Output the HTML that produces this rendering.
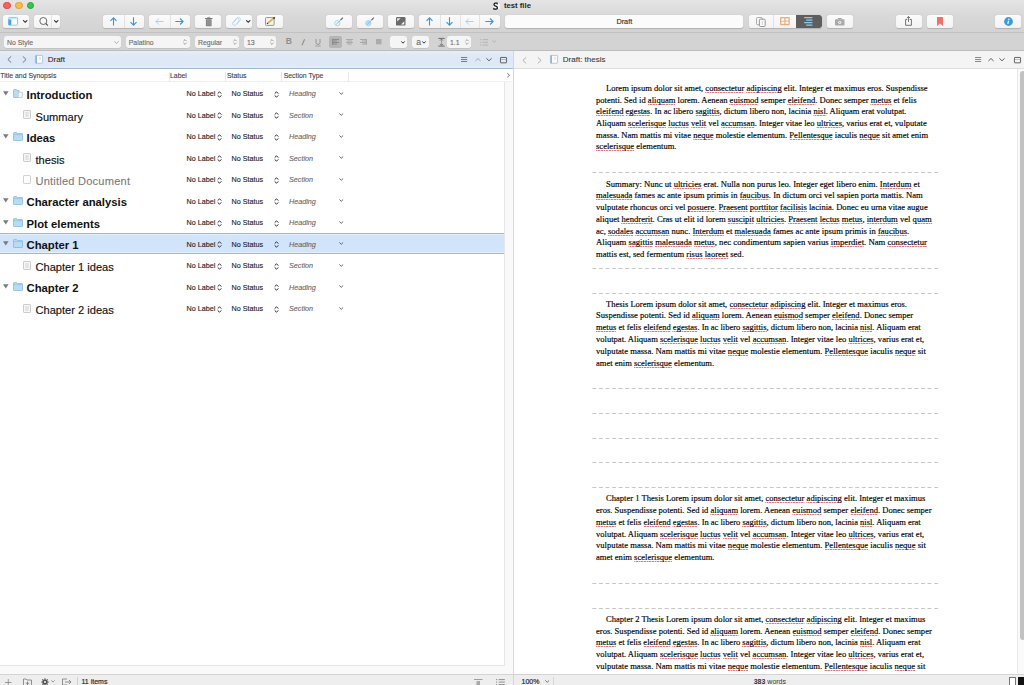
<!DOCTYPE html>
<html><head><meta charset="utf-8">
<style>
*{margin:0;padding:0;box-sizing:border-box}
html,body{width:1024px;height:685px;overflow:hidden;background:#fff;font-family:"Liberation Sans",sans-serif}
.a{position:absolute}
#tb{position:absolute;left:0;top:0;width:1024px;height:33px;background:linear-gradient(#e5e5e5,#d9d9d9 45%,#d3d3d3);border-bottom:1px solid #c2c2c2}
.tl{position:absolute;top:1.5px;width:7.5px;height:7.5px;border-radius:50%}
.btn{position:absolute;top:15px;height:12.5px;background:linear-gradient(#fbfbfb,#f3f3f3);border-radius:2.5px;box-shadow:0 0.6px 1px rgba(0,0,0,0.17)}
.sep{position:absolute;top:0;bottom:0;width:1px;background:#e2e2e2}
#fb{position:absolute;left:0;top:33px;width:1024px;height:18px;background:#d3d3d3;border-bottom:1px solid #bcbcbc}
.fbox{position:absolute;top:3px;height:11.5px;background:#f5f5f5;border-radius:2.5px;box-shadow:0 0.5px 0.5px rgba(0,0,0,0.15);font-size:6.9px;color:#6a6a6a;line-height:13px;padding-left:3px;-webkit-text-stroke:0.1px #6a6a6a}
svg{position:absolute;overflow:visible}
#bh{position:absolute;left:0;top:51px;width:513px;height:18px;background:linear-gradient(#e7eefa,#dfe8f6 30%,#dfe8f6 80%,#e4edfa);border-bottom:1px solid #a3b9d2}
#eh{position:absolute;left:514px;top:51px;width:510px;height:18px;background:#f4f4f4;border-bottom:1px solid #dedede}
#split{position:absolute;left:513px;top:51px;width:1px;height:634px;background:#d6d6d6}
#ch{position:absolute;left:0;top:69px;width:513px;height:13px;background:#fff;border-bottom:1px solid #efefef;font-size:6.9px;color:#404040;-webkit-text-stroke:0.1px #404040}
#ch div{position:absolute;top:2.9px}
.cdiv{position:absolute;top:1px;width:1px;height:11px;background:#e9e9e9}
#ol{position:absolute;left:0;top:82px;width:505px;height:584px;background:#fff;border-right:1px solid #e6e6e6;border-bottom:1px solid #e6e6e6}
#olfill{position:absolute;left:0;top:82px;width:513px;height:592px;background:#f9f9f9}
.sel{position:absolute;left:0;width:504px;height:21px;background:#d2e4fa;border-top:1px solid #a3b8cf;border-bottom:1px solid #a3b8cf;box-shadow:inset 0 1px #e2effc,inset 0 -1px #e2effc}
.nm{position:absolute;font-size:11.1px;line-height:14px;color:#111;white-space:nowrap;margin-top:2px;-webkit-text-stroke:0.15px #111}
.nm.b{font-weight:bold;font-size:11.3px;margin-top:1.5px;-webkit-text-stroke:0}
.nm.g{color:#7a7a7a;letter-spacing:0.2px;-webkit-text-stroke:0.1px #7a7a7a}
.cell{position:absolute;font-size:7.2px;line-height:10px;color:#222;white-space:nowrap;margin-top:1.6px;-webkit-text-stroke:0.12px #222}
.cell.it{font-style:italic;color:#666;-webkit-text-stroke:0.1px #666}
.ico{position:absolute}
.ln{position:absolute;font-family:"Liberation Serif",serif;font-size:8.55px;line-height:11px;color:#000;-webkit-text-stroke:0.15px #000;white-space:nowrap;transform-origin:0 0}
.ln i{font-style:normal}
.m{background:repeating-linear-gradient(90deg,#e07a7a 0 1px,#f3c4c4 1px 1.6px) left bottom/100% 1px no-repeat}
.dash{position:absolute;left:592.1px;width:347px;height:1px}
#ft{position:absolute;left:0;top:674px;width:1024px;height:11px;background:#eeeeee;border-top:1px solid #d4d4d4}
#sb{position:absolute;left:1017px;top:69px;width:7px;height:605px;background:#fafafa;border-left:1px solid #e8e8e8}
#thumb{position:absolute;left:1019.5px;top:71px;width:6px;height:569px;background:#c2c2c2;border-radius:3px}
.ht{position:absolute;font-size:7.6px;color:#333;white-space:nowrap}
</style></head><body>
<!-- toolbar -->
<div id="tb">
 <div class="tl" style="left:3px;background:#fc605b;border:0.6px solid #e2463f"></div>
 <div class="tl" style="left:15px;background:#fdbc40;border:0.6px solid #df9e2a"></div>
 <div class="tl" style="left:26.8px;background:#34c84a;border:0.6px solid #1da534"></div>
 <div class="ht" style="left:504px;top:0.3px;font-size:7.7px;font-weight:bold;color:#262626;line-height:11px">test file</div>
 <svg style="left:492px;top:1px" width="9" height="9" viewBox="0 0 9 9"><path d="M0.8 0.8H5.8L8.2 3.2V8.6H0.8Z" fill="#fafafa" stroke="#d6d6d6" stroke-width="0.5"/><path d="M5.4 2.2Q2.2 1.6 2 3.4Q2 4.6 3.8 5.2Q5.6 5.8 5.4 7.2Q5 8.5 2 8" fill="none" stroke="#111" stroke-width="1.3"/><path d="M5.3 1.7V3.6M1.6 6.8V8.6" stroke="#222" stroke-width="0.9"/></svg>

 <div class="btn" style="left:3.3px;width:25.5px"><svg style="left:4.6px;top:2px" width="10" height="8.6" viewBox="0 0 10 8.6"><rect x="0.45" y="0.45" width="9.1" height="7.7" rx="1" fill="#fff" stroke="#86c1e8" stroke-width="0.9"/><rect x="1" y="1" width="8" height="1.3" fill="#bfeefd"/><rect x="0.5" y="2.4" width="2.9" height="5.7" fill="#4ba5e4"/><rect x="3.4" y="2.4" width="0.8" height="5.7" fill="#cfe6f6"/></svg><svg style="left:19.5px;top:4.6px" width="4.4" height="3" viewBox="0 0 4.4 3"><path d="M0.5 0.5L2.2 2.3L3.9 0.5" fill="none" stroke="#333" stroke-width="1.1" stroke-linecap="round"/></svg></div>
 <div class="btn" style="left:34px;width:26px"><svg style="left:4.6px;top:2.2px" width="10" height="10" viewBox="0 0 10 10"><circle cx="4.3" cy="4" r="3.5" fill="none" stroke="#505050" stroke-width="0.85"/><path d="M6.8 6.5L8.9 8.6" stroke="#505050" stroke-width="1.1"/></svg><div class="sep" style="left:17px"></div><svg style="left:19.8px;top:4.6px" width="4.4" height="3" viewBox="0 0 4.4 3"><path d="M0.5 0.5L2.2 2.3L3.9 0.5" fill="none" stroke="#333" stroke-width="1.1" stroke-linecap="round"/></svg></div>

 <div class="btn" style="left:103px;width:41px"><div class="sep" style="left:20.5px"></div>
  <svg style="left:7px;top:2px" width="7" height="9" viewBox="0 0 7 9"><path d="M3.5 8.6V0.9M0.5 3.9L3.5 0.9L6.5 3.9" fill="none" stroke="#3a95d5" stroke-width="1.1"/></svg>
  <svg style="left:27px;top:2px" width="7" height="9" viewBox="0 0 7 9"><path d="M3.5 0.3V8.1M0.5 5.1L3.5 8.1L6.5 5.1" fill="none" stroke="#3a95d5" stroke-width="1.1"/></svg></div>
 <div class="btn" style="left:149px;width:41px"><div class="sep" style="left:20.5px"></div>
  <svg style="left:6px;top:3px" width="9" height="7" viewBox="0 0 9 7"><path d="M8.6 3.5H0.9M3.9 0.5L0.9 3.5L3.9 6.5" fill="none" stroke="#a6d1ef" stroke-width="1"/></svg>
  <svg style="left:26px;top:3px" width="9" height="7" viewBox="0 0 9 7"><path d="M0.3 3.5H8.1M5.1 0.5L8.1 3.5L5.1 6.5" fill="none" stroke="#3a95d5" stroke-width="1.1"/></svg></div>
 <div class="btn" style="left:194.75px;width:26.25px"><svg style="left:9.8px;top:1.7px" width="7.5" height="9.3" viewBox="0 0 7.5 9.3"><path d="M2.6 1V0.4H4.9V1" fill="none" stroke="#777" stroke-width="0.7"/><rect x="0" y="1" width="7.5" height="1.1" fill="#7a7a7a"/><rect x="0.9" y="2.3" width="5.7" height="6.9" rx="0.6" fill="#7f7f7f"/><rect x="1.8" y="3" width="3.9" height="5.4" fill="#9a9a9a"/><path d="M3.1 3V8.4M4.4 3V8.4" stroke="#7f7f7f" stroke-width="0.5"/></svg></div>
 <div class="btn" style="left:226px;width:26px"><svg style="left:5.5px;top:1.8px" width="9" height="9" viewBox="0 0 9 9"><g transform="rotate(40 4.5 4.5)"><path d="M3 7.2V2.6Q3 1.2 4.5 1.2Q6 1.2 6 2.6V7.4Q6 9.3 4.2 9.3Q2.4 9.3 2.4 7.4V1.6Q2.4 -0.4 4.5 -0.4Q6.6 -0.4 6.6 1.6V6.6" fill="none" stroke="#a8d6f2" stroke-width="0.75"/></g></svg><svg style="left:19.6px;top:4.6px" width="4.4" height="3" viewBox="0 0 4.4 3"><path d="M0.5 0.5L2.2 2.3L3.9 0.5" fill="none" stroke="#333" stroke-width="1.1" stroke-linecap="round"/></svg></div>
 <div class="btn" style="left:257.25px;width:25.75px"><svg style="left:7.7px;top:2.2px" width="10.5" height="9" viewBox="0 0 10.5 9"><rect x="0.5" y="0.6" width="8.6" height="7.8" rx="0.8" fill="#f4f4f4" stroke="#8c8c8c" stroke-width="0.9"/><path d="M2.6 6.3L8.6 1.4" stroke="#e2b43a" stroke-width="1.8"/><path d="M8.4 1.6L9.8 0.4" stroke="#333" stroke-width="1.6"/><path d="M2.8 6.1L2 6.9" stroke="#222" stroke-width="1.1"/></svg></div>

 <div class="btn" style="left:326px;width:26px"><svg style="left:8px;top:1.5px" width="10" height="9.5" viewBox="0 0 10 9.5"><circle cx="3.3" cy="6.2" r="2.6" fill="none" stroke="#9fd0f0" stroke-width="0.9"/><path d="M2.2 7.4L7 2.6" stroke="#6fb6e6" stroke-width="0.9"/><path d="M6.6 3L8.9 0.7" stroke="#666" stroke-width="1.1"/></svg></div>
 <div class="btn" style="left:357px;width:26px"><svg style="left:8px;top:1.5px" width="10" height="9.5" viewBox="0 0 10 9.5"><circle cx="3.3" cy="6.2" r="2.6" fill="#bfe0f6" stroke="#9fd0f0" stroke-width="0.9"/><path d="M2.2 7.4L7 2.6" stroke="#6fb6e6" stroke-width="0.9"/><path d="M6.6 3L8.9 0.7" stroke="#666" stroke-width="1.1"/></svg></div>
 <div class="btn" style="left:388px;width:25.75px"><svg style="left:8.2px;top:2px" width="9.5" height="9" viewBox="0 0 9.5 9"><rect x="0" y="0" width="9.5" height="8.6" rx="1.2" fill="#6a6a6a"/><path d="M1.2 1.2H4.6L1.2 4.4Z M8.3 7.4H4.9L8.3 4.2Z" fill="#f0f0f0"/></svg></div>
 <div class="btn" style="left:419px;width:80.6px"><div class="sep" style="left:21px"></div><div class="sep" style="left:40.6px"></div><div class="sep" style="left:60.4px"></div>
  <svg style="left:7px;top:2px" width="7" height="9" viewBox="0 0 7 9"><path d="M3.5 8.6V0.9M0.5 3.9L3.5 0.9L6.5 3.9" fill="none" stroke="#3a95d5" stroke-width="1.1"/></svg>
  <svg style="left:26.5px;top:2px" width="7" height="9" viewBox="0 0 7 9"><path d="M3.5 0.3V8.1M0.5 5.1L3.5 8.1L6.5 5.1" fill="none" stroke="#3a95d5" stroke-width="1.1"/></svg>
  <svg style="left:45.5px;top:3px" width="9" height="7" viewBox="0 0 9 7"><path d="M8.6 3.5H0.9M3.9 0.5L0.9 3.5L3.9 6.5" fill="none" stroke="#a6d1ef" stroke-width="1"/></svg>
  <svg style="left:65.5px;top:3px" width="9" height="7" viewBox="0 0 9 7"><path d="M0.3 3.5H8.1M5.1 0.5L8.1 3.5L5.1 6.5" fill="none" stroke="#3a95d5" stroke-width="1.1"/></svg></div>
 <div class="btn" style="left:505px;width:238px;background:#fbfbfb"><div class="ht" style="left:0.3px;width:238px;text-align:center;top:1.7px;font-size:7.3px;color:#333;-webkit-text-stroke:0.15px #333">Draft</div></div>
 <div class="btn" style="left:748.5px;width:73px;overflow:hidden"><div class="sep" style="left:24.5px"></div>
  <svg style="left:7px;top:1.8px" width="11" height="10" viewBox="0 0 11 10"><rect x="0.5" y="0.5" width="5.8" height="7.2" rx="1" fill="#f6f6f6" stroke="#8e8e8e" stroke-width="0.7"/><rect x="3.4" y="2.2" width="5.8" height="7.3" rx="1" fill="#f8f8f8" stroke="#7a7a7a" stroke-width="0.75"/><path d="M6.3 4.3V7.6" stroke="#b0b0b0" stroke-width="0.8" stroke-dasharray="0.8 0.4"/></svg>
  <svg style="left:31.4px;top:2px" width="10" height="8.5" viewBox="0 0 10 8.5"><rect x="0" y="0" width="9.8" height="8.2" rx="1" fill="#e7ae80"/><rect x="1.3" y="1.4" width="3" height="2.2" fill="#fff"/><rect x="5.5" y="1.4" width="3" height="2.2" fill="#fff"/><rect x="1.3" y="4.6" width="3" height="2.2" fill="#fff"/><rect x="5.5" y="4.6" width="3" height="2.2" fill="#fff"/></svg>
  <div style="position:absolute;left:47.5px;top:-0.5px;width:26px;height:13.5px;background:#5e5e5e;border-radius:0 2.5px 2.5px 0"></div>
  <svg style="left:55.4px;top:1.8px" width="9" height="9" viewBox="0 0 9 9"><path d="M0.2 0.6H8.4M2.2 3.1H8.4M0.2 5.6H8.4M2.2 8.1H8.4" stroke="#8ccaf0" stroke-width="1.1"/></svg></div>
 <div class="btn" style="left:827px;width:26px"><svg style="left:8.2px;top:2.5px" width="9.5" height="7.5" viewBox="0 0 9.5 7.5"><rect x="0" y="1.2" width="9.5" height="6.3" rx="0.8" fill="#a9a9a9"/><rect x="2.8" y="0" width="3.9" height="1.6" fill="#a9a9a9"/><circle cx="4.75" cy="4.3" r="1.6" fill="#f3f3f3"/><circle cx="4.75" cy="4.3" r="0.8" fill="#a9a9a9"/></svg></div>
 <div class="btn" style="left:895.5px;width:26px"><svg style="left:9.3px;top:1px" width="7" height="10" viewBox="0 0 7 10"><path d="M2.2 3.5H0.6V9.3H6.4V3.5H4.8" fill="none" stroke="#555" stroke-width="0.8"/><path d="M3.5 6V0.6M1.8 2.2L3.5 0.5L5.2 2.2" fill="none" stroke="#555" stroke-width="0.8"/></svg></div>
 <div class="btn" style="left:926.75px;width:25.75px"><svg style="left:10px;top:2px" width="6" height="9" viewBox="0 0 6 9"><path d="M0 0H6V9L3 6.6L0 9Z" fill="#f26f6a"/></svg></div>
 <div class="btn" style="left:995.2px;width:26.1px"><svg style="left:8.5px;top:1.7px" width="9" height="9" viewBox="0 0 9 9"><circle cx="4.5" cy="4.5" r="4.4" fill="#3a9ede"/><circle cx="4.9" cy="2.2" r="0.75" fill="#fff"/><path d="M4.5 3.7L3.9 7" stroke="#fff" stroke-width="1.1"/></svg></div>
</div>

<!-- format bar -->
<div id="fb">
 <div class="fbox" style="left:4px;width:116.75px">No Style<svg style="left:109.5px;top:4.8px" width="5" height="3" viewBox="0 0 5 3"><path d="M0.4 0.4L2.5 2.4L4.6 0.4" fill="none" stroke="#999" stroke-width="0.8"/></svg></div>
 <div class="fbox" style="left:125.75px;width:64px">Palatino<svg style="left:57.5px;top:2.8px" width="4" height="6" viewBox="0 0 4 6"><path d="M0.4 2.2L2 0.6L3.6 2.2M0.4 3.8L2 5.4L3.6 3.8" fill="none" stroke="#888" stroke-width="0.8"/></svg></div>
 <div class="fbox" style="left:195px;width:44px">Regular<svg style="left:37.5px;top:2.8px" width="4" height="6" viewBox="0 0 4 6"><path d="M0.4 2.2L2 0.6L3.6 2.2M0.4 3.8L2 5.4L3.6 3.8" fill="none" stroke="#888" stroke-width="0.8"/></svg></div>
 <div class="fbox" style="left:244px;width:32px">13<svg style="left:25.5px;top:2.8px" width="4" height="6" viewBox="0 0 4 6"><path d="M0.4 2.2L2 0.6L3.6 2.2M0.4 3.8L2 5.4L3.6 3.8" fill="none" stroke="#888" stroke-width="0.8"/></svg></div>
 <div class="ht" style="left:285.8px;top:3.3px;font-size:8.6px;font-weight:bold;color:#8e8e8e;line-height:10px">B</div>
 <svg style="left:301px;top:6.3px" width="4.5" height="6.5" viewBox="0 0 4.5 6.5"><path d="M3.6 0.2L1 6.3" stroke="#8e8e8e" stroke-width="1.1"/></svg>
 <svg style="left:314.6px;top:6.2px" width="6" height="7.5" viewBox="0 0 6 7.5"><path d="M1 0V3.6Q1 5.4 3 5.4Q5 5.4 5 3.6V0" fill="none" stroke="#8e8e8e" stroke-width="0.9"/><path d="M0.2 7H5.8" stroke="#8e8e8e" stroke-width="0.7"/></svg>
 <div class="a" style="left:329px;top:2.5px;width:12.9px;height:12.3px;background:#b5b5b5;border-radius:2.2px"></div>
 <svg style="left:332px;top:6.3px" width="7" height="5.5" viewBox="0 0 7 5.5"><path d="M0 0.5H7M0 2H5M0 3.5H7M0 5H5" stroke="#8c8c8c" stroke-width="1"/><path d="M0.6 0V5.5" stroke="#8c8c8c" stroke-width="1.2"/></svg>
 <svg style="left:346.2px;top:6.3px" width="7" height="5.5" viewBox="0 0 7 5.5"><path d="M0 0.5H7M1.2 2H5.8M0 3.5H7M1.2 5H5.8" stroke="#a8a8a8" stroke-width="1"/></svg>
 <svg style="left:360.3px;top:6.3px" width="7" height="5.5" viewBox="0 0 7 5.5"><path d="M0 0.5H7M2 2H7M0 3.5H7M2 5H7" stroke="#a8a8a8" stroke-width="1"/><path d="M6.4 0V5.5" stroke="#a8a8a8" stroke-width="1.2"/></svg>
 <svg style="left:375.5px;top:6.3px" width="5.5" height="5.3" viewBox="0 0 5.5 5.3"><rect width="5.5" height="5.3" fill="#ababab"/></svg>
 <div class="fbox" style="left:390.4px;width:16.5px"><svg style="left:10.5px;top:4.8px" width="4" height="3" viewBox="0 0 4 3"><path d="M0.3 0.4L2 2.2L3.7 0.4" fill="none" stroke="#333" stroke-width="1"/></svg></div>
 <div class="fbox" style="left:412px;width:16.5px;color:#6a6a6a;font-size:8.6px;padding-left:4.3px;line-height:12px">a<svg style="left:10.3px;top:4.8px" width="4" height="3" viewBox="0 0 4 3"><path d="M0.3 0.4L2 2.2L3.7 0.4" fill="none" stroke="#333" stroke-width="1"/></svg></div>
 <svg style="left:438.2px;top:4.6px" width="7" height="8.5" viewBox="0 0 7 8.5"><path d="M0.3 0.4H6.7M0.3 8.1H6.7" fill="none" stroke="#555" stroke-width="0.8"/><path d="M3.5 1.2V7.3" stroke="#666" stroke-width="0.5"/><path d="M2 2.6L3.5 1.1L5 2.6M2 5.9L3.5 7.4L5 5.9" fill="none" stroke="#555" stroke-width="0.7"/></svg>
 <div class="fbox" style="left:447px;width:24px">1.1<svg style="left:17.5px;top:2.8px" width="4" height="6" viewBox="0 0 4 6"><path d="M0.4 2.2L2 0.6L3.6 2.2M0.4 3.8L2 5.4L3.6 3.8" fill="none" stroke="#888" stroke-width="0.8"/></svg></div>
 <svg style="left:480px;top:5.5px" width="8" height="7" viewBox="0 0 8 7"><path d="M0 0.6H1.2M0 3.3H1.2M0 6H1.2M2.5 0.6H8M2.5 3.3H8M2.5 6H8" stroke="#b0b0b0" stroke-width="0.9"/></svg>
 <svg style="left:492px;top:7.3px" width="4.5" height="3" viewBox="0 0 4.5 3"><path d="M0.3 0.4L2.25 2.3L4.2 0.4" fill="none" stroke="#aaa" stroke-width="0.8"/></svg>
</div>

<!-- binder -->
<div id="olfill"></div>
<div id="bh">
 <svg style="left:6.7px;top:5px" width="5" height="7" viewBox="0 0 5 7"><path d="M4.2 0.4L0.9 3.5L4.2 6.6" fill="none" stroke="#6a6a6a" stroke-width="0.9"/></svg>
 <svg style="left:22.3px;top:5px" width="5" height="7" viewBox="0 0 5 7"><path d="M0.8 0.4L4.1 3.5L0.8 6.6" fill="none" stroke="#6a6a6a" stroke-width="0.9"/></svg>
 <svg style="left:35.2px;top:4.3px" width="8" height="8.7" viewBox="0 0 8 8.7"><rect x="0.4" y="0.4" width="7.2" height="7.9" rx="0.6" fill="#fafafa" stroke="#a9bfd0" stroke-width="0.8"/><rect x="0.4" y="0.4" width="1.6" height="7.9" fill="#8fb6d4"/><path d="M4.2 3H5.8M5 3V4.6" stroke="#c9b79a" stroke-width="0.5"/></svg>
 <div class="ht" style="left:47.7px;top:4.4px;font-size:8px;color:#1e1e1e;-webkit-text-stroke:0.05px #1e1e1e">Draft</div>
 <svg style="left:461.3px;top:6px" width="6.2" height="5" viewBox="0 0 6.2 5"><path d="M0 0.5H6.2M0 2.5H6.2M0 4.5H6.2" stroke="#7a7a7a" stroke-width="1"/></svg>
 <svg style="left:474.7px;top:6.6px" width="6" height="3.3" viewBox="0 0 6 3.3"><path d="M0.4 3L3 0.5L5.6 3" fill="none" stroke="#a0a0a0" stroke-width="0.9"/></svg>
 <svg style="left:485.9px;top:6.9px" width="6" height="3.3" viewBox="0 0 6 3.3"><path d="M0.4 0.3L3 2.8L5.6 0.3" fill="none" stroke="#505050" stroke-width="0.9"/></svg>
 <svg style="left:500.2px;top:6px" width="7" height="6.3" viewBox="0 0 7 6.3"><rect x="0.45" y="0.45" width="6.1" height="5.4" rx="0.5" fill="none" stroke="#555" stroke-width="0.9"/><path d="M0.5 2.5H6.5" stroke="#8a8a8a" stroke-width="0.5"/></svg>
</div>
<div id="ch">
 <div style="left:0.3px">Title and Synopsis</div>
 <div class="cdiv" style="left:168.5px"></div><div style="left:170px">Label</div>
 <div class="cdiv" style="left:225.2px"></div><div style="left:226.9px">Status</div>
 <div class="cdiv" style="left:281.1px"></div><div style="left:283.7px">Section Type</div>
 <div class="cdiv" style="left:347.5px"></div>
 <svg style="left:507.2px;top:4.4px" width="3" height="4.5" viewBox="0 0 3 4.5"><path d="M0.3 0.3L2.6 2.25L0.3 4.2" fill="none" stroke="#555" stroke-width="0.8"/></svg>
</div>
<div id="ol"></div>
<svg class="ico" style="left:3px;top:90.8px" width="6" height="5" viewBox="0 0 6 5"><path d="M0 0.2H5.6L2.8 4.6Z" fill="#7b7b7b"/></svg>
<svg class="ico" style="left:13px;top:88.8px" width="10" height="9" viewBox="0 0 10 9"><path d="M0.5 1.2 Q0.5 0.6 1.1 0.6 H3.6 L4.4 1.6 H6 V8.5 H1.1 Q0.5 8.5 0.5 7.9 Z" fill="#b9dcf5" stroke="#86b8dc" stroke-width="0.8"/><rect x="5.2" y="3.2" width="4.3" height="5.3" fill="#f4f4f4" stroke="#c4c4c4" stroke-width="0.7"/></svg>
<div class="nm b" style="left:26.5px;top:86.2px">Introduction</div>
<div class="cell" style="left:186.5px;top:87.8px">No Label</div>
<svg class="ico" style="left:217px;top:90.8px" width="5" height="7" viewBox="0 0 5 7"><path d="M0.7 2.6 L2.5 0.8 L4.3 2.6 M0.7 4.4 L2.5 6.2 L4.3 4.4" fill="none" stroke="#262626" stroke-width="1"/></svg>
<div class="cell" style="left:231.5px;top:87.8px">No Status</div>
<svg class="ico" style="left:273.5px;top:90.8px" width="5" height="7" viewBox="0 0 5 7"><path d="M0.7 2.6 L2.5 0.8 L4.3 2.6 M0.7 4.4 L2.5 6.2 L4.3 4.4" fill="none" stroke="#262626" stroke-width="1"/></svg>
<div class="cell it" style="left:289px;top:87.8px">Heading</div>
<svg class="ico" style="left:339.2px;top:91.8px" width="4.5" height="3" viewBox="0 0 4.5 3"><path d="M0.4 0.5 L2.25 2.3 L4.1 0.5" fill="none" stroke="#555" stroke-width="0.9"/></svg>
<svg class="ico" style="left:23px;top:110.2px" width="8" height="9" viewBox="0 0 8 9"><rect x="0.5" y="0.5" width="7" height="8" rx="0.6" fill="#f6f6f6" stroke="#c6c6c6" stroke-width="0.9"/><rect x="2.2" y="2" width="3.6" height="5" fill="#e3e3e3"/></svg>
<div class="nm" style="left:35.5px;top:107.8px">Summary</div>
<div class="cell" style="left:186.5px;top:109.2px">No Label</div>
<svg class="ico" style="left:217px;top:112.2px" width="5" height="7" viewBox="0 0 5 7"><path d="M0.7 2.6 L2.5 0.8 L4.3 2.6 M0.7 4.4 L2.5 6.2 L4.3 4.4" fill="none" stroke="#262626" stroke-width="1"/></svg>
<div class="cell" style="left:231.5px;top:109.2px">No Status</div>
<svg class="ico" style="left:273.5px;top:112.2px" width="5" height="7" viewBox="0 0 5 7"><path d="M0.7 2.6 L2.5 0.8 L4.3 2.6 M0.7 4.4 L2.5 6.2 L4.3 4.4" fill="none" stroke="#262626" stroke-width="1"/></svg>
<div class="cell it" style="left:289px;top:109.2px">Section</div>
<svg class="ico" style="left:339.2px;top:113.2px" width="4.5" height="3" viewBox="0 0 4.5 3"><path d="M0.4 0.5 L2.25 2.3 L4.1 0.5" fill="none" stroke="#555" stroke-width="0.9"/></svg>
<svg class="ico" style="left:3px;top:133.8px" width="6" height="5" viewBox="0 0 6 5"><path d="M0 0.2H5.6L2.8 4.6Z" fill="#7b7b7b"/></svg>
<svg class="ico" style="left:13px;top:131.8px" width="10" height="9" viewBox="0 0 10 9"><path d="M0.5 1.2 Q0.5 0.6 1.1 0.6 H3.6 L4.4 1.6 H8.9 Q9.5 1.6 9.5 2.2 V7.9 Q9.5 8.5 8.9 8.5 H1.1 Q0.5 8.5 0.5 7.9 Z" fill="#b9dcf5" stroke="#86b8dc" stroke-width="0.8"/><path d="M0.6 2.6 H9.4" stroke="#86b8dc" stroke-width="0.6"/></svg>
<div class="nm b" style="left:26.5px;top:129.2px">Ideas</div>
<div class="cell" style="left:186.5px;top:130.8px">No Label</div>
<svg class="ico" style="left:217px;top:133.8px" width="5" height="7" viewBox="0 0 5 7"><path d="M0.7 2.6 L2.5 0.8 L4.3 2.6 M0.7 4.4 L2.5 6.2 L4.3 4.4" fill="none" stroke="#262626" stroke-width="1"/></svg>
<div class="cell" style="left:231.5px;top:130.8px">No Status</div>
<svg class="ico" style="left:273.5px;top:133.8px" width="5" height="7" viewBox="0 0 5 7"><path d="M0.7 2.6 L2.5 0.8 L4.3 2.6 M0.7 4.4 L2.5 6.2 L4.3 4.4" fill="none" stroke="#262626" stroke-width="1"/></svg>
<div class="cell it" style="left:289px;top:130.8px">Heading</div>
<svg class="ico" style="left:339.2px;top:134.8px" width="4.5" height="3" viewBox="0 0 4.5 3"><path d="M0.4 0.5 L2.25 2.3 L4.1 0.5" fill="none" stroke="#555" stroke-width="0.9"/></svg>
<svg class="ico" style="left:23px;top:153.2px" width="8" height="9" viewBox="0 0 8 9"><rect x="0.5" y="0.5" width="7" height="8" rx="0.6" fill="#f6f6f6" stroke="#c6c6c6" stroke-width="0.9"/><rect x="2.2" y="2" width="3.6" height="5" fill="#e3e3e3"/></svg>
<div class="nm" style="left:35.5px;top:150.8px">thesis</div>
<div class="cell" style="left:186.5px;top:152.2px">No Label</div>
<svg class="ico" style="left:217px;top:155.2px" width="5" height="7" viewBox="0 0 5 7"><path d="M0.7 2.6 L2.5 0.8 L4.3 2.6 M0.7 4.4 L2.5 6.2 L4.3 4.4" fill="none" stroke="#262626" stroke-width="1"/></svg>
<div class="cell" style="left:231.5px;top:152.2px">No Status</div>
<svg class="ico" style="left:273.5px;top:155.2px" width="5" height="7" viewBox="0 0 5 7"><path d="M0.7 2.6 L2.5 0.8 L4.3 2.6 M0.7 4.4 L2.5 6.2 L4.3 4.4" fill="none" stroke="#262626" stroke-width="1"/></svg>
<div class="cell it" style="left:289px;top:152.2px">Section</div>
<svg class="ico" style="left:339.2px;top:156.2px" width="4.5" height="3" viewBox="0 0 4.5 3"><path d="M0.4 0.5 L2.25 2.3 L4.1 0.5" fill="none" stroke="#555" stroke-width="0.9"/></svg>
<svg class="ico" style="left:23px;top:174.8px" width="8" height="9" viewBox="0 0 8 9"><rect x="0.5" y="0.5" width="7" height="8" rx="0.6" fill="#fff" stroke="#cdcdcd" stroke-width="0.9"/></svg>
<div class="nm g" style="left:35.5px;top:172.2px">Untitled Document</div>
<div class="cell" style="left:186.5px;top:173.8px">No Label</div>
<svg class="ico" style="left:217px;top:176.8px" width="5" height="7" viewBox="0 0 5 7"><path d="M0.7 2.6 L2.5 0.8 L4.3 2.6 M0.7 4.4 L2.5 6.2 L4.3 4.4" fill="none" stroke="#262626" stroke-width="1"/></svg>
<div class="cell" style="left:231.5px;top:173.8px">No Status</div>
<svg class="ico" style="left:273.5px;top:176.8px" width="5" height="7" viewBox="0 0 5 7"><path d="M0.7 2.6 L2.5 0.8 L4.3 2.6 M0.7 4.4 L2.5 6.2 L4.3 4.4" fill="none" stroke="#262626" stroke-width="1"/></svg>
<div class="cell it" style="left:289px;top:173.8px">Section</div>
<svg class="ico" style="left:339.2px;top:177.8px" width="4.5" height="3" viewBox="0 0 4.5 3"><path d="M0.4 0.5 L2.25 2.3 L4.1 0.5" fill="none" stroke="#555" stroke-width="0.9"/></svg>
<svg class="ico" style="left:3px;top:198.2px" width="6" height="5" viewBox="0 0 6 5"><path d="M0 0.2H5.6L2.8 4.6Z" fill="#7b7b7b"/></svg>
<svg class="ico" style="left:13px;top:196.2px" width="10" height="9" viewBox="0 0 10 9"><path d="M0.5 1.2 Q0.5 0.6 1.1 0.6 H3.6 L4.4 1.6 H8.9 Q9.5 1.6 9.5 2.2 V7.9 Q9.5 8.5 8.9 8.5 H1.1 Q0.5 8.5 0.5 7.9 Z" fill="#b9dcf5" stroke="#86b8dc" stroke-width="0.8"/><path d="M0.6 2.6 H9.4" stroke="#86b8dc" stroke-width="0.6"/></svg>
<div class="nm b" style="left:26.5px;top:193.8px">Character analysis</div>
<div class="cell" style="left:186.5px;top:195.2px">No Label</div>
<svg class="ico" style="left:217px;top:198.2px" width="5" height="7" viewBox="0 0 5 7"><path d="M0.7 2.6 L2.5 0.8 L4.3 2.6 M0.7 4.4 L2.5 6.2 L4.3 4.4" fill="none" stroke="#262626" stroke-width="1"/></svg>
<div class="cell" style="left:231.5px;top:195.2px">No Status</div>
<svg class="ico" style="left:273.5px;top:198.2px" width="5" height="7" viewBox="0 0 5 7"><path d="M0.7 2.6 L2.5 0.8 L4.3 2.6 M0.7 4.4 L2.5 6.2 L4.3 4.4" fill="none" stroke="#262626" stroke-width="1"/></svg>
<div class="cell it" style="left:289px;top:195.2px">Heading</div>
<svg class="ico" style="left:339.2px;top:199.2px" width="4.5" height="3" viewBox="0 0 4.5 3"><path d="M0.4 0.5 L2.25 2.3 L4.1 0.5" fill="none" stroke="#555" stroke-width="0.9"/></svg>
<svg class="ico" style="left:3px;top:219.8px" width="6" height="5" viewBox="0 0 6 5"><path d="M0 0.2H5.6L2.8 4.6Z" fill="#7b7b7b"/></svg>
<svg class="ico" style="left:13px;top:217.8px" width="10" height="9" viewBox="0 0 10 9"><path d="M0.5 1.2 Q0.5 0.6 1.1 0.6 H3.6 L4.4 1.6 H8.9 Q9.5 1.6 9.5 2.2 V7.9 Q9.5 8.5 8.9 8.5 H1.1 Q0.5 8.5 0.5 7.9 Z" fill="#b9dcf5" stroke="#86b8dc" stroke-width="0.8"/><path d="M0.6 2.6 H9.4" stroke="#86b8dc" stroke-width="0.6"/></svg>
<div class="nm b" style="left:26.5px;top:215.2px">Plot elements</div>
<div class="cell" style="left:186.5px;top:216.8px">No Label</div>
<svg class="ico" style="left:217px;top:219.8px" width="5" height="7" viewBox="0 0 5 7"><path d="M0.7 2.6 L2.5 0.8 L4.3 2.6 M0.7 4.4 L2.5 6.2 L4.3 4.4" fill="none" stroke="#262626" stroke-width="1"/></svg>
<div class="cell" style="left:231.5px;top:216.8px">No Status</div>
<svg class="ico" style="left:273.5px;top:219.8px" width="5" height="7" viewBox="0 0 5 7"><path d="M0.7 2.6 L2.5 0.8 L4.3 2.6 M0.7 4.4 L2.5 6.2 L4.3 4.4" fill="none" stroke="#262626" stroke-width="1"/></svg>
<div class="cell it" style="left:289px;top:216.8px">Heading</div>
<svg class="ico" style="left:339.2px;top:220.8px" width="4.5" height="3" viewBox="0 0 4.5 3"><path d="M0.4 0.5 L2.25 2.3 L4.1 0.5" fill="none" stroke="#555" stroke-width="0.9"/></svg>
<div class="sel" style="top:233.0px"></div>
<svg class="ico" style="left:3px;top:241.2px" width="6" height="5" viewBox="0 0 6 5"><path d="M0 0.2H5.6L2.8 4.6Z" fill="#7b7b7b"/></svg>
<svg class="ico" style="left:13px;top:239.2px" width="10" height="9" viewBox="0 0 10 9"><path d="M0.5 1.2 Q0.5 0.6 1.1 0.6 H3.6 L4.4 1.6 H8.9 Q9.5 1.6 9.5 2.2 V7.9 Q9.5 8.5 8.9 8.5 H1.1 Q0.5 8.5 0.5 7.9 Z" fill="#b9dcf5" stroke="#86b8dc" stroke-width="0.8"/><path d="M0.6 2.6 H9.4" stroke="#86b8dc" stroke-width="0.6"/></svg>
<div class="nm b" style="left:26.5px;top:236.8px">Chapter 1</div>
<div class="cell" style="left:186.5px;top:238.2px">No Label</div>
<svg class="ico" style="left:217px;top:241.2px" width="5" height="7" viewBox="0 0 5 7"><path d="M0.7 2.6 L2.5 0.8 L4.3 2.6 M0.7 4.4 L2.5 6.2 L4.3 4.4" fill="none" stroke="#262626" stroke-width="1"/></svg>
<div class="cell" style="left:231.5px;top:238.2px">No Status</div>
<svg class="ico" style="left:273.5px;top:241.2px" width="5" height="7" viewBox="0 0 5 7"><path d="M0.7 2.6 L2.5 0.8 L4.3 2.6 M0.7 4.4 L2.5 6.2 L4.3 4.4" fill="none" stroke="#262626" stroke-width="1"/></svg>
<div class="cell it" style="left:289px;top:238.2px">Heading</div>
<svg class="ico" style="left:339.2px;top:242.2px" width="4.5" height="3" viewBox="0 0 4.5 3"><path d="M0.4 0.5 L2.25 2.3 L4.1 0.5" fill="none" stroke="#555" stroke-width="0.9"/></svg>
<svg class="ico" style="left:23px;top:260.8px" width="8" height="9" viewBox="0 0 8 9"><rect x="0.5" y="0.5" width="7" height="8" rx="0.6" fill="#f6f6f6" stroke="#c6c6c6" stroke-width="0.9"/><rect x="2.2" y="2" width="3.6" height="5" fill="#e3e3e3"/></svg>
<div class="nm" style="left:35.5px;top:258.2px">Chapter 1 ideas</div>
<div class="cell" style="left:186.5px;top:259.8px">No Label</div>
<svg class="ico" style="left:217px;top:262.8px" width="5" height="7" viewBox="0 0 5 7"><path d="M0.7 2.6 L2.5 0.8 L4.3 2.6 M0.7 4.4 L2.5 6.2 L4.3 4.4" fill="none" stroke="#262626" stroke-width="1"/></svg>
<div class="cell" style="left:231.5px;top:259.8px">No Status</div>
<svg class="ico" style="left:273.5px;top:262.8px" width="5" height="7" viewBox="0 0 5 7"><path d="M0.7 2.6 L2.5 0.8 L4.3 2.6 M0.7 4.4 L2.5 6.2 L4.3 4.4" fill="none" stroke="#262626" stroke-width="1"/></svg>
<div class="cell it" style="left:289px;top:259.8px">Section</div>
<svg class="ico" style="left:339.2px;top:263.8px" width="4.5" height="3" viewBox="0 0 4.5 3"><path d="M0.4 0.5 L2.25 2.3 L4.1 0.5" fill="none" stroke="#555" stroke-width="0.9"/></svg>
<svg class="ico" style="left:3px;top:284.2px" width="6" height="5" viewBox="0 0 6 5"><path d="M0 0.2H5.6L2.8 4.6Z" fill="#7b7b7b"/></svg>
<svg class="ico" style="left:13px;top:282.2px" width="10" height="9" viewBox="0 0 10 9"><path d="M0.5 1.2 Q0.5 0.6 1.1 0.6 H3.6 L4.4 1.6 H8.9 Q9.5 1.6 9.5 2.2 V7.9 Q9.5 8.5 8.9 8.5 H1.1 Q0.5 8.5 0.5 7.9 Z" fill="#b9dcf5" stroke="#86b8dc" stroke-width="0.8"/><path d="M0.6 2.6 H9.4" stroke="#86b8dc" stroke-width="0.6"/></svg>
<div class="nm b" style="left:26.5px;top:279.8px">Chapter 2</div>
<div class="cell" style="left:186.5px;top:281.2px">No Label</div>
<svg class="ico" style="left:217px;top:284.2px" width="5" height="7" viewBox="0 0 5 7"><path d="M0.7 2.6 L2.5 0.8 L4.3 2.6 M0.7 4.4 L2.5 6.2 L4.3 4.4" fill="none" stroke="#262626" stroke-width="1"/></svg>
<div class="cell" style="left:231.5px;top:281.2px">No Status</div>
<svg class="ico" style="left:273.5px;top:284.2px" width="5" height="7" viewBox="0 0 5 7"><path d="M0.7 2.6 L2.5 0.8 L4.3 2.6 M0.7 4.4 L2.5 6.2 L4.3 4.4" fill="none" stroke="#262626" stroke-width="1"/></svg>
<div class="cell it" style="left:289px;top:281.2px">Heading</div>
<svg class="ico" style="left:339.2px;top:285.2px" width="4.5" height="3" viewBox="0 0 4.5 3"><path d="M0.4 0.5 L2.25 2.3 L4.1 0.5" fill="none" stroke="#555" stroke-width="0.9"/></svg>
<svg class="ico" style="left:23px;top:303.8px" width="8" height="9" viewBox="0 0 8 9"><rect x="0.5" y="0.5" width="7" height="8" rx="0.6" fill="#f6f6f6" stroke="#c6c6c6" stroke-width="0.9"/><rect x="2.2" y="2" width="3.6" height="5" fill="#e3e3e3"/></svg>
<div class="nm" style="left:35.5px;top:301.2px">Chapter 2 ideas</div>
<div class="cell" style="left:186.5px;top:302.8px">No Label</div>
<svg class="ico" style="left:217px;top:305.8px" width="5" height="7" viewBox="0 0 5 7"><path d="M0.7 2.6 L2.5 0.8 L4.3 2.6 M0.7 4.4 L2.5 6.2 L4.3 4.4" fill="none" stroke="#262626" stroke-width="1"/></svg>
<div class="cell" style="left:231.5px;top:302.8px">No Status</div>
<svg class="ico" style="left:273.5px;top:305.8px" width="5" height="7" viewBox="0 0 5 7"><path d="M0.7 2.6 L2.5 0.8 L4.3 2.6 M0.7 4.4 L2.5 6.2 L4.3 4.4" fill="none" stroke="#262626" stroke-width="1"/></svg>
<div class="cell it" style="left:289px;top:302.8px">Section</div>
<svg class="ico" style="left:339.2px;top:306.8px" width="4.5" height="3" viewBox="0 0 4.5 3"><path d="M0.4 0.5 L2.25 2.3 L4.1 0.5" fill="none" stroke="#555" stroke-width="0.9"/></svg>

<!-- editor -->
<div id="eh">
 <svg style="left:8px;top:5.5px" width="5" height="7" viewBox="0 0 5 7"><path d="M4.2 0.4L0.9 3.4L4.2 6.4" fill="none" stroke="#a5a5a5" stroke-width="0.85"/></svg>
 <svg style="left:23px;top:5.5px" width="5" height="7" viewBox="0 0 5 7"><path d="M0.8 0.4L4.1 3.4L0.8 6.4" fill="none" stroke="#a5a5a5" stroke-width="0.85"/></svg>
 <svg style="left:36.2px;top:4.2px" width="8" height="8.7" viewBox="0 0 8 8.7"><rect x="0.4" y="0.4" width="7.2" height="7.9" rx="0.6" fill="#fafafa" stroke="#a9bfd0" stroke-width="0.8"/><rect x="0.4" y="0.4" width="1.6" height="7.9" fill="#8fb6d4"/><path d="M4.2 3H5.8M5 3V4.6" stroke="#c9b79a" stroke-width="0.5"/></svg>
 <div class="ht" style="left:48.8px;top:4.2px;font-size:8px;color:#3c3c3c;-webkit-text-stroke:0.1px #3c3c3c">Draft: thesis</div>
 <svg style="left:461px;top:6px" width="6.2" height="5" viewBox="0 0 6.2 5"><path d="M0 0.5H6.2M0 2.5H6.2M0 4.5H6.2" stroke="#8a8a8a" stroke-width="1"/></svg>
 <svg style="left:474px;top:6.6px" width="6" height="3.3" viewBox="0 0 6 3.3"><path d="M0.4 3L3 0.5L5.6 3" fill="none" stroke="#505050" stroke-width="0.9"/></svg>
 <svg style="left:485px;top:6.9px" width="6" height="3.3" viewBox="0 0 6 3.3"><path d="M0.4 0.3L3 2.8L5.6 0.3" fill="none" stroke="#505050" stroke-width="0.9"/></svg>
 <svg style="left:499.5px;top:6px" width="7" height="6.3" viewBox="0 0 7 6.3"><rect x="0.45" y="0.45" width="6.1" height="5.4" rx="0.5" fill="none" stroke="#555" stroke-width="0.9"/><path d="M0.5 2.5H6.5" stroke="#8a8a8a" stroke-width="0.5"/></svg>
</div>
<div id="sb"></div><div id="thumb"></div>
<div class="ln" style="left:606.00px;top:82.91px;transform:scaleX(1.0013)">Lorem ipsum dolor sit amet, <i class="m">consectetur</i> <i class="m">adipiscing</i> elit. Integer et maximus eros. Suspendisse</div>
<div class="ln" style="left:595.50px;top:94.57px;transform:scaleX(1.0015)">potenti. Sed id <i class="m">aliquam</i> lorem. Aenean <i class="m">euismod</i> semper <i class="m">eleifend</i>. Donec semper <i class="m">metus</i> et felis</div>
<div class="ln" style="left:595.50px;top:106.23px;transform:scaleX(0.9969)"><i class="m">eleifend</i> <i class="m">egestas</i>. In ac libero <i class="m">sagittis</i>, dictum libero non, lacinia <i class="m">nisl</i>. Aliquam erat volutpat.</div>
<div class="ln" style="left:595.50px;top:117.89px;transform:scaleX(1.0023)">Aliquam <i class="m">scelerisque</i> <i class="m">luctus</i> <i class="m">velit</i> vel <i class="m">accumsan</i>. Integer vitae leo <i class="m">ultrices</i>, varius erat et, vulputate</div>
<div class="ln" style="left:595.50px;top:129.55px;transform:scaleX(1.0028)">massa. Nam mattis mi vitae <i class="m">neque</i> molestie elementum. <i class="m">Pellentesque</i> iaculis <i class="m">neque</i> sit amet enim</div>
<div class="ln" style="left:595.50px;top:141.21px;transform:scaleX(1.0035)"><i class="m">scelerisque</i> elementum.</div>
<div class="ln" style="left:606.00px;top:178.51px;transform:scaleX(1.0068)">Summary: Nunc ut <i class="m">ultricies</i> erat. Nulla non purus leo. Integer eget libero enim. <i class="m">Interdum</i> et</div>
<div class="ln" style="left:595.50px;top:190.29px;transform:scaleX(1.0071)"><i class="m">malesuada</i> fames ac ante ipsum primis in <i class="m">faucibus</i>. In dictum orci vel sapien porta mattis. Nam</div>
<div class="ln" style="left:595.50px;top:202.07px;transform:scaleX(1.0046)">vulputate rhoncus orci vel <i class="m">posuere</i>. <i class="m">Praesent</i> <i class="m">porttitor</i> <i class="m">facilisis</i> lacinia. Donec eu urna vitae augue</div>
<div class="ln" style="left:595.50px;top:213.85px;transform:scaleX(1.0063)">aliquet <i class="m">hendrerit</i>. Cras ut elit id lorem <i class="m">suscipit</i> <i class="m">ultricies</i>. <i class="m">Praesent</i> <i class="m">lectus</i> <i class="m">metus</i>, <i class="m">interdum</i> vel <i class="m">quam</i></div>
<div class="ln" style="left:595.50px;top:225.63px;transform:scaleX(1.0055)">ac, <i class="m">sodales</i> <i class="m">accumsan</i> nunc. <i class="m">Interdum</i> et <i class="m">malesuada</i> fames ac ante ipsum primis in <i class="m">faucibus</i>.</div>
<div class="ln" style="left:595.50px;top:237.41px;transform:scaleX(1.0145)">Aliquam <i class="m">sagittis</i> <i class="m">malesuada</i> <i class="m">metus</i>, nec condimentum sapien varius <i class="m">imperdiet</i>. Nam <i class="m">consectetur</i></div>
<div class="ln" style="left:595.50px;top:249.19px;transform:scaleX(1.0042)">mattis est, sed fermentum <i class="m">risus</i> <i class="m">laoreet</i> sed.</div>
<div class="ln" style="left:606.00px;top:298.61px;transform:scaleX(0.9976)">Thesis Lorem ipsum dolor sit amet, <i class="m">consectetur</i> <i class="m">adipiscing</i> elit. Integer et maximus eros.</div>
<div class="ln" style="left:595.50px;top:310.41px;transform:scaleX(1.0031)">Suspendisse potenti. Sed id <i class="m">aliquam</i> lorem. Aenean <i class="m">euismod</i> semper <i class="m">eleifend</i>. Donec semper</div>
<div class="ln" style="left:595.50px;top:322.21px;transform:scaleX(0.9933)"><i class="m">metus</i> et felis <i class="m">eleifend</i> <i class="m">egestas</i>. In ac libero <i class="m">sagittis</i>, dictum libero non, lacinia <i class="m">nisl</i>. Aliquam erat</div>
<div class="ln" style="left:595.50px;top:334.01px;transform:scaleX(1.0011)">volutpat. Aliquam <i class="m">scelerisque</i> <i class="m">luctus</i> <i class="m">velit</i> vel <i class="m">accumsan</i>. Integer vitae leo <i class="m">ultrices</i>, varius erat et,</div>
<div class="ln" style="left:595.50px;top:345.81px;transform:scaleX(1.0081)">vulputate massa. Nam mattis mi vitae <i class="m">neque</i> molestie elementum. <i class="m">Pellentesque</i> iaculis <i class="m">neque</i> sit</div>
<div class="ln" style="left:595.50px;top:357.61px;transform:scaleX(0.9991)">amet enim <i class="m">scelerisque</i> elementum.</div>
<div class="ln" style="left:606.00px;top:493.41px;transform:scaleX(1.0021)">Chapter 1 Thesis Lorem ipsum dolor sit amet, <i class="m">consectetur</i> <i class="m">adipiscing</i> elit. Integer et maximus</div>
<div class="ln" style="left:595.50px;top:505.13px;transform:scaleX(1.0023)">eros. Suspendisse potenti. Sed id <i class="m">aliquam</i> lorem. Aenean <i class="m">euismod</i> semper <i class="m">eleifend</i>. Donec semper</div>
<div class="ln" style="left:595.50px;top:516.85px;transform:scaleX(0.9933)"><i class="m">metus</i> et felis <i class="m">eleifend</i> <i class="m">egestas</i>. In ac libero <i class="m">sagittis</i>, dictum libero non, lacinia <i class="m">nisl</i>. Aliquam erat</div>
<div class="ln" style="left:595.50px;top:528.57px;transform:scaleX(1.0011)">volutpat. Aliquam <i class="m">scelerisque</i> <i class="m">luctus</i> <i class="m">velit</i> vel <i class="m">accumsan</i>. Integer vitae leo <i class="m">ultrices</i>, varius erat et,</div>
<div class="ln" style="left:595.50px;top:540.29px;transform:scaleX(1.0081)">vulputate massa. Nam mattis mi vitae <i class="m">neque</i> molestie elementum. <i class="m">Pellentesque</i> iaculis <i class="m">neque</i> sit</div>
<div class="ln" style="left:595.50px;top:552.01px;transform:scaleX(1.0025)">amet enim <i class="m">scelerisque</i> elementum.</div>
<div class="ln" style="left:606.00px;top:613.71px;transform:scaleX(1.0021)">Chapter 2 Thesis Lorem ipsum dolor sit amet, <i class="m">consectetur</i> <i class="m">adipiscing</i> elit. Integer et maximus</div>
<div class="ln" style="left:595.50px;top:625.59px;transform:scaleX(1.0032)">eros. Suspendisse potenti. Sed id <i class="m">aliquam</i> lorem. Aenean <i class="m">euismod</i> semper <i class="m">eleifend</i>. Donec semper</div>
<div class="ln" style="left:595.50px;top:637.46px;transform:scaleX(0.9927)"><i class="m">metus</i> et felis <i class="m">eleifend</i> <i class="m">egestas</i>. In ac libero <i class="m">sagittis</i>, dictum libero non, lacinia <i class="m">nisl</i>. Aliquam erat</div>
<div class="ln" style="left:595.50px;top:649.34px;transform:scaleX(1.0008)">volutpat. Aliquam <i class="m">scelerisque</i> <i class="m">luctus</i> <i class="m">velit</i> vel <i class="m">accumsan</i>. Integer vitae leo <i class="m">ultrices</i>, varius erat et,</div>
<div class="ln" style="left:595.50px;top:661.21px;transform:scaleX(1.0066)">vulputate massa. Nam mattis mi vitae <i class="m">neque</i> molestie elementum. <i class="m">Pellentesque</i> iaculis <i class="m">neque</i> sit</div>
<svg class="dash" style="top:172px" width="347" height="1"><path d="M0.4 0.5H347" stroke="#c6c6c6" stroke-width="1" stroke-dasharray="3.9 2.672"/></svg>
<svg class="dash" style="top:268px" width="347" height="1"><path d="M0.4 0.5H347" stroke="#c6c6c6" stroke-width="1" stroke-dasharray="3.9 2.672"/></svg>
<svg class="dash" style="top:293px" width="347" height="1"><path d="M0.4 0.5H347" stroke="#c6c6c6" stroke-width="1" stroke-dasharray="3.9 2.672"/></svg>
<svg class="dash" style="top:388px" width="347" height="1"><path d="M0.4 0.5H347" stroke="#c6c6c6" stroke-width="1" stroke-dasharray="3.9 2.672"/></svg>
<svg class="dash" style="top:413px" width="347" height="1"><path d="M0.4 0.5H347" stroke="#c6c6c6" stroke-width="1" stroke-dasharray="3.9 2.672"/></svg>
<svg class="dash" style="top:438px" width="347" height="1"><path d="M0.4 0.5H347" stroke="#c6c6c6" stroke-width="1" stroke-dasharray="3.9 2.672"/></svg>
<svg class="dash" style="top:462px" width="347" height="1"><path d="M0.4 0.5H347" stroke="#c6c6c6" stroke-width="1" stroke-dasharray="3.9 2.672"/></svg>
<svg class="dash" style="top:487px" width="347" height="1"><path d="M0.4 0.5H347" stroke="#c6c6c6" stroke-width="1" stroke-dasharray="3.9 2.672"/></svg>
<svg class="dash" style="top:583px" width="347" height="1"><path d="M0.4 0.5H347" stroke="#c6c6c6" stroke-width="1" stroke-dasharray="3.9 2.672"/></svg>
<svg class="dash" style="top:608px" width="347" height="1"><path d="M0.4 0.5H347" stroke="#c6c6c6" stroke-width="1" stroke-dasharray="3.9 2.672"/></svg>
<div id="split"></div>

<!-- footer -->
<div id="ft">
 <svg style="left:4.8px;top:3.5px" width="6.5" height="7" viewBox="0 0 6.5 7"><path d="M3.25 0V7M0 3.5H6.5" stroke="#7a7a7a" stroke-width="0.7"/></svg>
 <svg style="left:23px;top:2.5px" width="9" height="8" viewBox="0 0 9 8"><path d="M0.5 8V1H3L4 2H8.5V8" fill="none" stroke="#777" stroke-width="0.8"/><path d="M4.5 3.5V7M2.8 5.2H6.2" stroke="#777" stroke-width="0.8"/></svg>
 <svg style="left:40.5px;top:3px" width="8" height="8" viewBox="0 0 8 8"><path d="M4 0.2V7.8M0.2 4H7.8M1.3 1.3L6.7 6.7M6.7 1.3L1.3 6.7" stroke="#555" stroke-width="1.1"/><circle cx="4" cy="4" r="2.6" fill="#555"/><circle cx="4" cy="4" r="1.1" fill="#eee"/></svg>
 <svg style="left:51px;top:5px" width="4" height="3" viewBox="0 0 4 3"><path d="M0.3 0.4L2 2L3.7 0.4" fill="none" stroke="#777" stroke-width="0.7"/></svg>
 <svg style="left:62px;top:2.5px" width="10" height="8" viewBox="0 0 10 8"><path d="M5 1H0.5V7H5" fill="none" stroke="#777" stroke-width="0.8"/><path d="M3 4H9M7 2L9 4L7 6" fill="none" stroke="#777" stroke-width="0.8"/></svg>
 <div class="a" style="left:76.5px;top:2px;width:1px;height:9px;background:#d0d0d0"></div>
 <div class="ht" style="left:81.5px;top:3px;font-size:7px;color:#222;-webkit-text-stroke:0.15px #222">11 items</div>
 <svg style="left:473.8px;top:3.8px" width="8.5" height="8" viewBox="0 0 8.5 8"><path d="M0 0.5H8.5" stroke="#888" stroke-width="0.8"/><rect x="2.5" y="2" width="3.5" height="4.5" fill="#aaa"/><path d="M0 7.5H8.5" stroke="#999" stroke-width="0.8"/></svg>
 <svg style="left:496.2px;top:4.2px" width="9" height="8" viewBox="0 0 9 8"><path d="M0 0.6H1.2M0 3.1H1.2M0 5.6H1.2M2.6 0.6H8.8M2.6 3.1H8.8M2.6 5.6H8.8" stroke="#858585" stroke-width="0.9"/></svg>
 <div class="a" style="left:513px;top:0;width:1px;height:11px;background:#d6d6d6"></div>
 <div class="ht" style="left:521.5px;top:3px;font-size:7px;color:#222;-webkit-text-stroke:0.15px #222">100%</div>
 <svg style="left:545px;top:5px" width="4.5" height="3" viewBox="0 0 4.5 3"><path d="M0.3 0.4L2.25 2.3L4.2 0.4" fill="none" stroke="#555" stroke-width="0.8"/></svg>
 <div class="a" style="left:552.9px;top:2px;width:1px;height:9px;background:#d6d6d6"></div>
 <div class="ht" style="left:753.7px;top:3px;font-size:7px;color:#333"><b>383</b> words</div>
 <div class="a" style="left:1009px;top:1.5px;width:7px;height:9.5px;background:#fff;border:0.8px solid #777"></div>
 <div class="a" style="left:1018.3px;top:1.5px;width:6px;height:9.5px;background:#111"></div>
</div>
</body></html>
